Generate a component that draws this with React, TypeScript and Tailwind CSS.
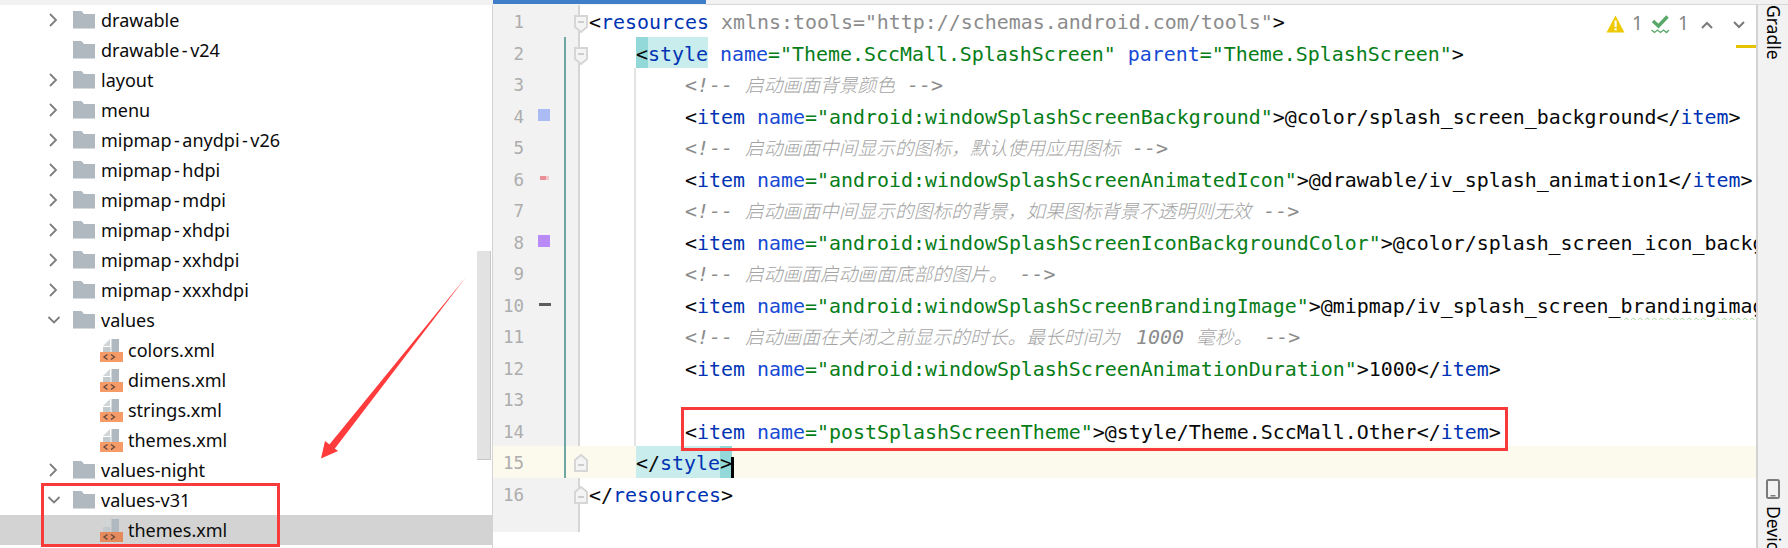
import React from "react";

const TREE: { label: string; kind: "closed" | "open" | "none" | "file"; selected?: boolean }[] = [
  { label: "drawable", kind: "closed" },
  { label: "drawable-v24", kind: "none" },
  { label: "layout", kind: "closed" },
  { label: "menu", kind: "closed" },
  { label: "mipmap-anydpi-v26", kind: "closed" },
  { label: "mipmap-hdpi", kind: "closed" },
  { label: "mipmap-mdpi", kind: "closed" },
  { label: "mipmap-xhdpi", kind: "closed" },
  { label: "mipmap-xxhdpi", kind: "closed" },
  { label: "mipmap-xxxhdpi", kind: "closed" },
  { label: "values", kind: "open" },
  { label: "colors.xml", kind: "file" },
  { label: "dimens.xml", kind: "file" },
  { label: "strings.xml", kind: "file" },
  { label: "themes.xml", kind: "file" },
  { label: "values-night", kind: "closed" },
  { label: "values-v31", kind: "open" },
  { label: "themes.xml", kind: "file", selected: true },
];

function Chevron({ open }: { open: boolean }) {
  return (
    <svg width="14" height="14" viewBox="0 0 14 14" fill="none" stroke="#7d7d7d" strokeWidth="1.8">
      {open ? <path d="M1.5 4 L7 9.5 L12.5 4" /> : <path d="M3 1 L9 7 L3 13" />}
    </svg>
  );
}

function Folder() {
  return (
    <svg width="22" height="18" viewBox="0 0 22 18">
      <path d="M0 0 H8.5 L11 3 H22 V17 H0 Z" fill="#afb9bf" />
      <path d="M0 17 H22 V18 H0 Z" fill="#d5dadd" />
    </svg>
  );
}

function XmlFile({ selected }: { selected?: boolean }) {
  return (
    <svg width="23" height="23" viewBox="0 0 23 23" fill="none">
      <path d="M3 7 L10 0 V7 Z" fill="#d0d5d8" />
      <rect x="3" y="8" width="7.5" height="5" fill="#c3cace" />
      <rect x="11.5" y="0" width="7.5" height="13" fill="#afb9bf" />
      <rect x="0" y="13" width="23" height="10" fill={selected ? "#e58a5c" : "#f69a68"} />
      <path d="M7.5 15.5 L4 18 L7.5 20.5 M11 15.5 L14.5 18 L11 20.5" stroke="#5e4a3e" strokeWidth="1.3" />
    </svg>
  );
}

function Label({ text }: { text: string }) {
  if (text.startsWith("values") || !text.includes("-")) return <span className="ml-[6px] pt-[1px]">{text}</span>;
  const parts = text.split("-");
  return (
    <span className="ml-[6px] pt-[1px]">
      {parts.map((p, i) => (
        <React.Fragment key={i}>
          {i > 0 && <span className="mx-[2.5px]">-</span>}
          {p}
        </React.Fragment>
      ))}
    </span>
  );
}

function TreeRow({ item }: { item: (typeof TREE)[number] }) {
  return (
    <div
      className={`flex h-[30px] items-center text-[18px] text-[#0b0b0b] ${item.selected ? "bg-[#d3d3d3]" : ""} ${
        item.kind === "file" ? "pl-[100px]" : "pl-[47px]"
      }`}
    >
      {item.kind !== "file" && (
        <>
          <div className="flex w-[14px] justify-center">
            {item.kind !== "none" && <Chevron open={item.kind === "open"} />}
          </div>
          <div className="ml-[12px]">
            <Folder />
          </div>
          <Label text={item.label} />
        </>
      )}
      {item.kind === "file" && (
        <>
          <XmlFile selected={item.selected} />
          <span className="ml-[5px] pt-[1px]">{item.label}</span>
        </>
      )}
    </div>
  );
}

const B = ({ children }: { children: React.ReactNode }) => <span className="text-[#0033b3]">{children}</span>;
const A = ({ children }: { children: React.ReactNode }) => <span className="text-[#174ad4]">{children}</span>;
const G = ({ children }: { children: React.ReactNode }) => <span className="text-[#067d17]">{children}</span>;
const C = ({ children }: { children: React.ReactNode }) => (
  <span className="text-[18.75px] font-light italic text-[#a3a3a3]">{children}</span>
);

function Comment({ children }: { children: React.ReactNode }) {
  return <span className="italic text-[#8c8c8c]">{children}</span>;
}

function Item({ name, value }: { name: string; value: React.ReactNode }) {
  return (
    <>
      {"<"}
      <B>item</B> <A>name</A>
      <G>="{name}"</G>
      {">"}
      {value}
      {"</"}
      <B>item</B>
      {">"}
    </>
  );
}

type Line = { code: React.ReactNode; guide?: boolean; mark?: React.ReactNode; indent?: number };

const LINES: Line[] = [
  {
    code: (
      <>
        {"<"}
        <B>resources</B>{" "}
        <span className="text-[#8c8c8c]">xmlns:tools="http://schemas.android.com/tools"</span>
        {">"}
      </>
    ),
  },
  {
    indent: 4,
    code: (
      <>
        <span className="inline-block bg-[#93d9d9]">{"<"}</span>
        <span className="inline-block bg-[#c9ecec] text-[#0033b3]">style</span> <A>name</A>
        <G>="Theme.SccMall.SplashScreen"</G> <A>parent</A>
        <G>="Theme.SplashScreen"</G>
        {">"}
      </>
    ),
  },
  {
    guide: true,
    code: (
      <Comment>
        {"<!-- "}
        <C>启动画面背景颜色</C>
        {" -->"}
      </Comment>
    ),
  },
  {
    guide: true,
    mark: <div className="h-[12px] w-[12px] bg-[#abbbf5]" />,
    code: <Item name="android:windowSplashScreenBackground" value="@color/splash_screen_background" />,
  },
  {
    guide: true,
    code: (
      <Comment>
        {"<!-- "}
        <C>启动画面中间显示的图标，默认使用应用图标</C>
        {" -->"}
      </Comment>
    ),
  },
  {
    guide: true,
    mark: (
      <div className="ml-[2px] flex h-[4px] w-[9px]">
        <div className="w-[6px] bg-[#ea8f95]" />
        <div className="w-[3px] bg-[#f2c7c9]" />
      </div>
    ),
    code: <Item name="android:windowSplashScreenAnimatedIcon" value="@drawable/iv_splash_animation1" />,
  },
  {
    guide: true,
    code: (
      <Comment>
        {"<!-- "}
        <C>启动画面中间显示的图标的背景，如果图标背景不透明则无效</C>
        {" -->"}
      </Comment>
    ),
  },
  {
    guide: true,
    mark: <div className="h-[12px] w-[12px] bg-[#b98bf7]" />,
    code: <Item name="android:windowSplashScreenIconBackgroundColor" value="@color/splash_screen_icon_background" />,
  },
  {
    guide: true,
    code: (
      <Comment>
        {"<!-- "}
        <C>启动画面启动画面底部的图片。</C>
        {" -->"}
      </Comment>
    ),
  },
  {
    guide: true,
    mark: <div className="ml-[1px] h-[3px] w-[12px] bg-[#5c5c5c]" />,
    code: (
      <Item
        name="android:windowSplashScreenBrandingImage"
        value={
          <>
            @mipmap/iv_splash_screen_
            <span className="underline decoration-wavy decoration-[#a9d7a2] decoration-1 underline-offset-4">
              brandingimage
            </span>
          </>
        }
      />
    ),
  },
  {
    guide: true,
    code: (
      <Comment>
        {"<!-- "}
        <C>启动画面在关闭之前显示的时长。最长时间为</C>
        <span className="ml-[4px]">{" 1000 "}</span>
        <C>毫秒。</C>
        {" -->"}
      </Comment>
    ),
  },
  {
    guide: true,
    code: <Item name="android:windowSplashScreenAnimationDuration" value="1000" />,
  },
  { guide: true, code: "" },
  {
    guide: true,
    code: <Item name="postSplashScreenTheme" value="@style/Theme.SccMall.Other" />,
  },
  {
    indent: 4,
    code: (
      <span className="relative">
        <span className="inline-block bg-[#c9ecec]">
          {"</"}
          <span className="text-[#0033b3]">style</span>
        </span>
        <span className="inline-block bg-[#93d9d9]">{">"}</span>
        <span className="absolute right-[-2px] top-[5px] h-[24px] w-[3px] bg-black" />
      </span>
    ),
  },
  {
    code: (
      <>
        {"</"}
        <B>resources</B>
        {">"}
      </>
    ),
  },
];

function FoldIcon({ flip, top }: { flip?: boolean; top: string }) {
  return (
    <svg
      width="14"
      height="18"
      viewBox="0 0 14 18"
      className={`absolute left-[81px] ${top} ${flip ? "rotate-180" : ""}`}
      fill="#f4f4f4"
      stroke="#d6d6d6"
      strokeWidth="2"
    >
      <path d="M1 1 H13 V12 L7 17 L1 12 Z" />
      <path d="M4 7 H10" stroke="#c4c4c4" strokeWidth="1.6" />
    </svg>
  );
}

function CodeRow({ line, index }: { line: Line; index: number }) {
  const current = index === 14;
  const changed = index >= 1 && index <= 14;
  return (
    <div className={`relative flex h-[31.5px] ${current ? "bg-[#fcfaed]" : ""}`}>
      <div
        className={`flex w-[87px] shrink-0 items-center border-r-2 ${
          current ? "border-transparent" : "border-[#d6d6d6] bg-[#f2f2f2]"
        }`}
      >
        <div className="w-[31px] pt-[4px] text-right text-[17.5px] text-[#adadad]">{index + 1}</div>
        <div className="ml-[14px] w-[12px]">{line.mark}</div>
        <div className={`ml-[14px] h-full w-[2px] ${changed ? "bg-[#6fa8a3]" : ""}`} />
      </div>
      {index === 0 && <FoldIcon top="top-[10px]" />}
      {index === 1 && <FoldIcon top="top-[10px]" />}
      {index === 14 && <FoldIcon flip top="top-[8px]" />}
      {index === 15 && <FoldIcon flip top="top-[8px]" />}
      <div className="min-w-0 flex-1 overflow-hidden whitespace-pre leading-[35.5px]">
        {line.guide ? (
          <div className="ml-[54px] h-full border-l-2 border-[#e4e4e4] pl-[49px]">{line.code}</div>
        ) : (
          <div className={line.indent ? "pl-[56px]" : "pl-[9px]"}>{line.code}</div>
        )}
      </div>
    </div>
  );
}

function Inspections() {
  return (
    <div className="absolute right-[11px] top-[4px] flex h-[30px] items-center font-['Noto_Sans',sans-serif] text-[19px] text-[#858585]">
      <svg width="19" height="18" viewBox="0 0 19 18">
        <path d="M9.5 0.5 L18.5 17.5 H0.5 Z" fill="#eec900" />
        <rect x="8.5" y="5.5" width="2.2" height="6.5" fill="#fff" />
        <rect x="8.5" y="13.2" width="2.2" height="2.2" fill="#fff" />
      </svg>
      <span className="ml-[7px] w-[8px]">1</span>
      <svg width="19" height="19" viewBox="0 0 19 19" className="ml-[11px]" fill="none">
        <path d="M2 6 L7.5 11 L16.5 1.5" stroke="#59a869" strokeWidth="3.4" />
        <path d="M0.5 15 L3.5 17.5 L6.5 15 L9.5 17.5 L12.5 15 L15.5 17.5 L18 15" stroke="#59a869" strokeWidth="1.3" />
      </svg>
      <span className="ml-[8px] w-[8px]">1</span>
      <svg width="12" height="8" viewBox="0 0 12 8" className="ml-[15px] mt-[2px]" fill="none" stroke="#7a7a7a" strokeWidth="2">
        <path d="M1 7 L6 2 L11 7" />
      </svg>
      <svg width="12" height="8" viewBox="0 0 12 8" className="ml-[20px] mt-[2px]" fill="none" stroke="#7a7a7a" strokeWidth="2">
        <path d="M1 1 L6 6 L11 1" />
      </svg>
    </div>
  );
}

export default function App() {
  return (
    <div className="relative flex h-[548px] w-[1788px] flex-col overflow-hidden bg-white font-['Noto_Sans',sans-serif]">
      <div className="flex h-[5px] shrink-0 bg-[#f2f2f2]">
        <div className="w-[493px]" />
        <div className="h-[4px] w-[213px] bg-[#3f7fca]" />
        <div className="h-[5px] flex-1 border-b border-[#d8d8d8]" />
      </div>
      <div className="flex min-h-0 flex-1">
        <aside className="relative w-[493px] shrink-0 border-r border-[#d4d4d4]">
          {TREE.map((item, i) => (
            <TreeRow key={i} item={item} />
          ))}
          <div className="absolute left-[477px] top-[246px] h-[209px] w-[14px] border-b border-r border-[#c8c8c8] bg-[#e2e2e2]" />
        </aside>
        <main className="relative min-w-0 flex-1 bg-white font-['DejaVu_Sans_Mono','Noto_Sans_CJK_SC',monospace] text-[19.93px] leading-[31.5px] text-[#080808]">
          {LINES.map((line, i) => (
            <CodeRow key={i} line={line} index={i} />
          ))}
          <div className="flex h-[23px]">
            <div className="w-[87px] border-r-2 border-[#d6d6d6] bg-[#f2f2f2]" />
          </div>
          <Inspections />
          <div className="absolute right-0 top-[40px] h-[3px] w-[20px] bg-[#e6c300]" />
        </main>
        <aside className="flex w-[32px] shrink-0 flex-col items-center overflow-hidden border-l-2 border-[#d2d2d2] bg-[#f2f2f2] text-[17.5px] leading-none text-black">
          <span className="[writing-mode:vertical-rl]">Gradle</span>
          <svg width="14" height="20" viewBox="0 0 14 20" className="mt-[419px] shrink-0" fill="none">
            <rect x="1" y="1" width="12" height="18" rx="1.5" stroke="#7a7a7a" strokeWidth="2" />
            <rect x="4.5" y="16" width="5" height="1.5" fill="#7a7a7a" />
          </svg>
          <span className="mt-[7px] whitespace-nowrap [writing-mode:vertical-rl]">Device Manager</span>
        </aside>
      </div>

      <svg width="1788" height="548" viewBox="0 0 1788 548" className="pointer-events-none absolute left-0 top-0" fill="none">
        <path d="M466 277 L334.5 449 L329 445 Z" fill="#ff3b3b" stroke="none" />
        <path d="M321 458.5 L325 441 L338 451 Z" fill="#ff3b3b" stroke="none" />
      </svg>
      <div className="absolute left-[41px] top-[483px] h-[64px] w-[239px] border-[3px] border-[#f83a3a]" />
      <div className="absolute left-[681px] top-[407px] h-[44px] w-[827px] border-[3px] border-[#f83a3a]" />
    </div>
  );
}
